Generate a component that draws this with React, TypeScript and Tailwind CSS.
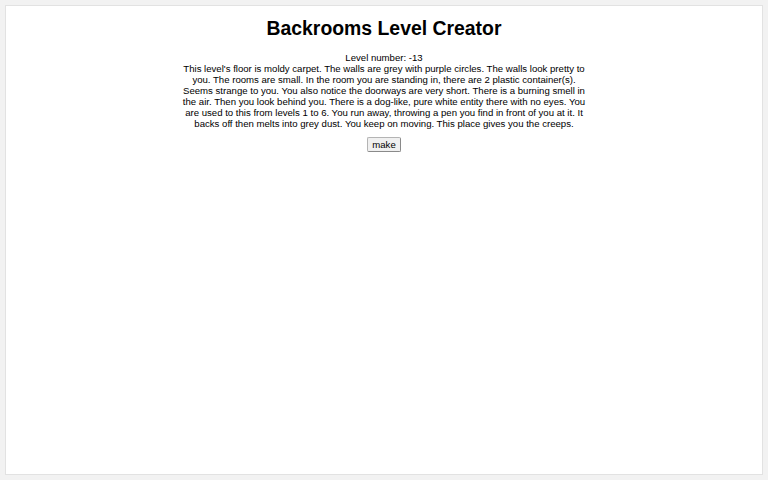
export default function App() {
  return (
    <div className="min-h-[480px] bg-[#f2f2f2] p-[5px]" style={{ fontFamily: '"Liberation Sans", Arial, sans-serif' }}>
      <div className="h-[470px] bg-white border border-[#e2e2e2] flex flex-col items-center text-black">
        <h1 className="mt-[8px] text-[19.4px] leading-[28px] font-bold">Backrooms Level Creator</h1>
        <p className="mt-[10px] text-[9.6px] leading-[11px]">Level number: -13</p>
        <p className="w-[408px] text-center text-[9.6px] leading-[11px]">
          This level's floor is moldy carpet. The walls are grey with purple circles. The walls look pretty to you. The
          rooms are small. In the room you are standing in, there are 2 plastic container(s). Seems strange to you. You
          also notice the doorways are very short. There is a burning smell in the air. Then you look behind you. There
          is a dog-like, pure white entity there with no eyes. You are used to this from levels 1 to 6. You run away,
          throwing a pen you find in front of you at it. It backs off then melts into grey dust. You keep on moving. This
          place gives you the creeps.
        </p>
        <button className="mt-[8px] text-[9.6px] leading-[12px] px-[4px] py-[0px] h-[15px] bg-[#f0f0f0] border border-[#b4b4b4] border-r-[#8a8a8a] border-b-[#8a8a8a] rounded-[2px]">
          make
        </button>
      </div>
    </div>
  );
}
